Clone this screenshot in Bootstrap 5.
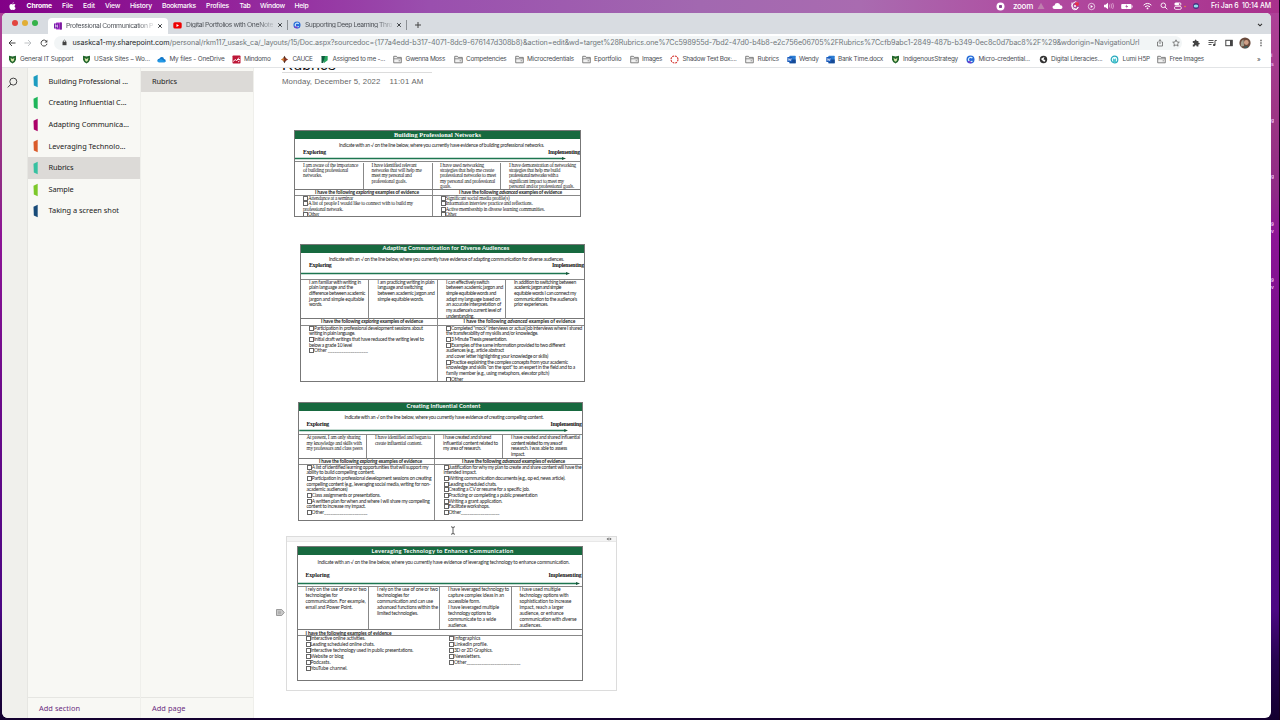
<!DOCTYPE html>
<html lang="en">
<head>
<meta charset="utf-8">
<title>Professional Communication Portfolio</title>
<meta name="viewport" content="width=device-width, initial-scale=1">
<link href="https://cdn.jsdelivr.net/npm/bootstrap@5.3.0/dist/css/bootstrap.min.css" rel="stylesheet">
<style>
html,body{height:100%}
body{margin:0;overflow:hidden;font-family:Inter,"Liberation Sans",sans-serif;color:#333;line-height:1}
svg{display:block;flex:none}
.desk{width:1280px;height:720px;background:linear-gradient(180deg,#b0429a 0,#9c3584 120px,#8f2a86 190px,#8d1496 235px,#6b0a8a 400px,#4b0783 610px,#260450 660px,#13002f 100%);border-right:1px solid #16001f;overflow:hidden}
.macbar{height:13px;background:linear-gradient(90deg,#820087 0,#93219a 220px,#9a4fae 430px,#a268b0 700px,#a96bb0 860px,#b04a9f 1050px,#a9308c 100%);color:#fff;font-size:6.8px;font-weight:500}
[data-w]{display:inline-block;white-space:nowrap}
.macmenu{display:grid;grid-template-columns:26.5px 35.5px 21px 22px 25px 32px 44px 33.5px 20.5px 34.5px 30px;align-items:center;height:12px}
.status{display:grid;grid-template-columns:22px 24px 15px 18px 17px 17px 17px 22px 17px 14px 18px 19px 60px;width:280px;margin-right:8px;align-items:center;height:12px}
.win{width:1269px;height:705px;margin-left:2px;border-radius:5px 5px 6px 6px;overflow:hidden;background:#fff}
.tabs{height:21px;background:#d8dce1;font-size:6.8px;color:#50545a}
.lights{width:46px;padding:7px 0 0 9.5px;gap:4px}
.lights i{width:6px;height:6px;border-radius:50%}
.tabx{height:16px;margin-top:5px}
.tabx.on{background:#fff;border-radius:4px 4px 0 0;width:120px}
.tx{flex:none;overflow:hidden;-webkit-mask-image:linear-gradient(90deg,#000 82%,#0003)}
.addr{height:17px;background:#fff}
.pill{width:1128px;height:14px;border-radius:7px;background:#f2f5f6;font-size:7.2px;color:#70757a}
.pill b{font-weight:400;color:#222528}
.marks{height:17px;font-size:6.4px;color:#4a4e54;border-bottom:1px solid #e2e4e6;display:grid;align-items:center;padding-left:5.5px;
 grid-template-columns:74px 75.5px 74.5px 48.5px 40px 73px 60.5px 61px 67px 48px 40.5px 75px 41.5px 39px 65px 75.5px 72.5px 71.5px 47px 101.5px 10px}
.marks>div{display:flex;align-items:center}
.marks svg{width:9px;height:9px;margin-right:3.5px}
.app{height:650px}
.rail{width:25.5px;background:#f0f0ec;border-right:1px solid #e6e6e2}
.pane{width:113px;background:#f8f8f4;font-family:"Noto Sans","Open Sans",sans-serif;font-size:7.4px;color:#222;border-right:1px solid #efefeb}
.sec{height:21.65px;padding-left:5px}
.sec svg{margin-right:11px}
.sel{background:#dcdad7}
.foot{height:21px;border-top:1px solid #e6e6e2;color:#6b2c80;padding-left:11.5px;line-height:20px}
.sheet{flex:1;overflow:hidden;position:relative}
.ttl{height:5px;width:150px;margin-left:28.5px;border-bottom:1px solid #dcdcdc;overflow:hidden;color:#111;font:500 15.5px/16px "Liberation Sans",sans-serif}
.ttl span{margin-top:-11px;vertical-align:top}
.when{height:17px;margin-left:28.5px;gap:9px;font:7.8px/18px "Liberation Sans",sans-serif;color:#666}
.rub{font-family:Lato,"Liberation Sans",sans-serif;font-size:5px;color:#262626;border:1px solid #777;background:#fff;overflow:hidden}
.rub .hd{background:#17693f;color:#fff;font-weight:700;font-size:5.8px;text-align:center;margin:-1px -1px 0}
.rub .lab,.serif{font-family:"Liberation Serif",serif}
.rub.serif,.rub .serif{font-size:5.3px}
.rub.serif .hd{font-size:6.3px}
.rub .lab{font-weight:700;font-size:5.8px;color:#111}
.rub .arw{height:3px;position:relative}
.rub .arw svg{width:100%;height:3px}
.lv{display:grid;border-top:1px solid #888;border-bottom:1px solid #777}
.lv>div+div,.ev>div+div,.ls>div+div{border-left:1px solid #888}
.lv>div,.ls>div{white-space:nowrap}
.ev,.ls{display:grid}
.ev{border-bottom:1px solid #888;font-weight:700;color:#222;font-size:4.9px}
.ln{height:var(--p);line-height:var(--p);display:block;white-space:nowrap}
.ln span,.ln em{vertical-align:top}
.ck span:before{content:"";display:inline-block;width:5px;height:5px;border:1px solid #666;vertical-align:-1px;background:#fff}
.r1{--p:5.4px;width:287px;height:87px;margin:40px 0 0 40.5px}
.r2{--p:5.7px;width:285px;height:137.5px;margin:27px 0 0 46.5px}
.r3{--p:5.7px;width:285px;height:118.5px;margin:20.5px 0 0 44px}
.box4{width:331px;height:155.5px;margin:15px 0 0 32.5px;border:1px solid #dcdcdc;position:relative}
.grip{height:5px;background:#f4f4f4;border-bottom:1px solid #e8e8e8}
.r4{--p:5.95px;width:286px;height:135px;margin:4.5px 0 0 9.5px}
.tag4{position:absolute;left:-11px;top:72.5px}
.caret{position:absolute;left:196.5px;top:458px}
.scrap{position:absolute;left:1271px;width:3px;overflow:hidden;color:#eebcf0;font:700 5px/5px "Liberation Sans",sans-serif}
</style>
</head>
<body>
<svg width="0" height="0" style="position:absolute">
<defs>
<symbol id="fold" viewBox="0 0 9 9"><path d="M.7 7.8V1.3h2.700l.8 1.100h4.100v5.400z" fill="#f1f1f1" stroke="#666" stroke-width=".8"/><path d="M.7 3.800h7.600M5.600 5.800h1.500" stroke="#666" stroke-width=".7"/></symbol>
<symbol id="shield" viewBox="0 0 9 9"><path d="M1 .8l3.500.6L8 .8v4Q7.300 7.400 4.500 8.600 1.700 7.400 1 4.800z" fill="#24672d"/><path d="M2.600 3l1.900 1 1.900-1-.6 2.700-1.300 1-1.300-1z" fill="#d6e6a8"/></symbol>
<symbol id="word" viewBox="0 0 9 9"><rect x="2.500" y=".7" width="6.200" height="7.600" rx=".6" fill="#2b7cd3"/><path d="M2.500 4.500h6.200v3.800H2.500z" fill="#174a94"/><rect x=".3" y="2" width="5" height="5" rx=".5" fill="#185abd"/><path d="M1.300 3.300l.7 2.400.8-2 .8 2 .7-2.400" fill="none" stroke="#fff" stroke-width=".6"/></symbol>
<symbol id="cc" viewBox="0 0 9 9"><circle cx="4.500" cy="4.500" r="4" fill="#276bd8"/><path d="M6.400 3.200A2.200 2.200 0 1 0 6.400 5.900" fill="none" stroke="#d6f0ff" stroke-width="1.200"/><path d="M1 6.500Q3 8.700 6 8.100L4 6z" fill="#7a35c9"/></symbol>
<symbol id="xx" viewBox="0 0 6 6"><path d="M1.200 1.200l3.600 3.600M4.800 1.200L1.200 4.800" stroke="#3c4043" stroke-width="1"/></symbol>
<symbol id="sct" viewBox="0 0 6 16"><path d="M5.600.5v15L1 13.500.6 3z" fill="currentColor"/></symbol>
</defs></svg>
<div class="desk position-relative">
 <div class="macbar d-flex justify-content-between">
  <div class="macmenu">
   <svg width="7" height="8" viewBox="0 0 14 16" style="margin-left:9px"><path d="M9.500 0Q9.500 3 6.800 3.600 6.800.8 9.500 0zM7 4.800C8 4.800 9 3.900 10.300 4q1.700.1 2.700 1.400-2 1.300-1.800 3.500.2 2 2.100 2.900Q11.800 15.800 9.800 15.900 8.200 15.300 7.200 15.300 6 15.400 5 15.900 3 16 1.500 12.300C-.2 8 1.500 4.500 4.300 4.100 5.500 4 6.300 4.800 7 4.800z" fill="#fff"/></svg>
   <span><b data-w="25.500">Chrome</b></span><span><span data-w="11">File</span></span><span><span data-w="12">Edit</span></span><span><span data-w="15">View</span></span><span><span data-w="22">History</span></span><span><span data-w="34">Bookmarks</span></span><span><span data-w="23">Profiles</span></span><span><span data-w="11">Tab</span></span><span><span data-w="25">Window</span></span><span><span data-w="14">Help</span></span>
  </div>
  <div class="status">
   <svg width="9" height="9" viewBox="0 0 9 9" style="margin-left:5px"><circle cx="4.500" cy="4.500" r="4" fill="#fff"/><rect x="3" y="3" width="3" height="3" rx=".7" fill="#86458e"/></svg>
   <span style="font-size:8px"><span data-w="20">zoom</span></span>
   <svg width="8" height="8" viewBox="0 0 8 8"><path d="M4 .8L7.500 7h-7z" fill="#bf7fae"/></svg>
   <svg width="11" height="8" viewBox="0 0 11 8"><path d="M2.500 7Q.4 6.800.5 5T2.500 3.400Q3 1 5.300 1T8.300 3.300Q10.500 3.400 10.500 5.200T8.800 7z" fill="#fff"/></svg>
   <svg width="10" height="10" viewBox="0 0 10 10"><path d="M2 1.500v4A3 3 0 0 0 8 6M8 2A3.500 3.500 0 1 0 8.500 6.500" fill="none" stroke="#fff"/><circle cx="7" cy="3" r="2" fill="#e4304c"/><circle cx="5" cy="5" r="1" fill="#fff"/></svg>
   <svg width="9" height="9" viewBox="0 0 9 9"><circle cx="4.500" cy="4.500" r="3.200" fill="none" stroke="#f4ddf0" stroke-width=".8"/><path d="M3.700 3l2.300 1.500L3.700 6z" fill="#fff"/></svg>
   <svg width="10" height="8" viewBox="0 0 10 8"><path d="M0 2.800h1.500L4 .8v6.400L1.500 5.200H0z" fill="#fff"/><path d="M5.300 2.500q1 1.500 0 3M7 1.700q1.600 2.300 0 4.600M8.600 1q2 3 0 6" fill="none" stroke="#e9b9dd" stroke-width=".7"/></svg>
   <svg width="12" height="7" viewBox="0 0 12 7"><rect x=".2" y="1" width="10.300" height="5" rx="1" fill="#fff"/><path d="M11.200 2.500v2" stroke="#fff" stroke-width=".8"/><path d="M5.800 1.300L4.300 3.700h1.500l-.7 2 2-2.600H5.600z" fill="#a33b90"/></svg>
   <svg width="9" height="8" viewBox="0 0 9 8"><path d="M.6 3.200q3.900-3.600 7.800 0M2 4.800q2.500-2.200 5 0" fill="none" stroke="#fff" stroke-width="1"/><circle cx="4.500" cy="6.400" r=".9" fill="#fff"/></svg>
   <svg width="8" height="8" viewBox="0 0 8 8"><circle cx="3.300" cy="3.300" r="2.300" fill="none" stroke="#fff" stroke-width=".9"/><path d="M5 5l2.300 2.300" stroke="#fff" stroke-width=".9"/></svg>
   <svg width="12" height="8" viewBox="0 0 12 8"><rect x=".4" y=".6" width="7" height="3" rx="1.500" fill="#fff"/><rect x=".4" y="4.400" width="7" height="3" rx="1.500" fill="none" stroke="#fff" stroke-width=".8"/><circle cx="5.700" cy="2.100" r=".9" fill="#aa3d94"/><circle cx="11" cy="4.500" r=".8" fill="#f08a35"/></svg>
   <svg width="8" height="8" viewBox="0 0 8 8"><circle cx="4" cy="4" r="3" fill="#493080"/><ellipse cx="4" cy="4" rx="2.300" ry="1.500" fill="#8fe1ee"/></svg>
   <span><span data-w="60" style="font-size:7px">Fri Jan 6&nbsp; 10:14 AM</span></span>
  </div>
 </div>
 <div class="win">
  <div class="tabs d-flex">
   <div class="lights d-flex"><i style="background:#e2463f"></i><i style="background:#e1ae35"></i><i style="background:#35b24a"></i></div>
   <div class="tabx on d-flex align-items-center">
    <svg width="8" height="8" viewBox="0 0 8 8" style="margin:0 4px 0 6px"><rect x="2" y=".5" width="5.800" height="7" rx=".5" fill="#b43ad0"/><path d="M6 .5h1.800v7H6z" fill="#7a1c9d"/><rect x="0" y="1.500" width="5" height="5" fill="#7719aa"/><path d="M1.500 5.500V2.600l2 2.800V2.600" stroke="#fff" stroke-width=".6" fill="none"/></svg>
    <div class="tx"><span data-w="87">Professional Communication P</span></div><svg width="6" height="6" style="margin-left:4px"><use href="#xx"/></svg>
   </div>
   <div class="tabx d-flex align-items-center" style="width:120px;border-right:1px solid #8c9095;height:10px;margin-top:7px">
    <svg width="9" height="7" viewBox="0 0 9 7" style="margin:0 4px 0 5px"><rect x=".3" y=".3" width="8.400" height="6.200" rx="1.500" fill="#e00"/><path d="M3.500 2l2.500 1.400-2.500 1.500z" fill="#fff"/></svg>
    <div class="tx"><span data-w="87">Digital Portfolios with OneNote</span></div><svg width="6" height="6" style="margin-left:4px"><use href="#xx"/></svg>
   </div>
   <div class="tabx d-flex align-items-center" style="width:119px;border-right:1px solid #8c9095;height:10px;margin-top:7px">
    <svg width="8" height="8" viewBox="0 0 9 9" style="margin:0 4px 0 5px"><use href="#cc"/></svg>
    <div class="tx"><span data-w="87">Supporting Deep Learning Thro</span></div><svg width="6" height="6" style="margin-left:4px"><use href="#xx"/></svg>
   </div>
   <svg width="8" height="8" viewBox="0 0 8 8" style="margin:8px 0 0 7px"><path d="M4 1v6M1 4h6" stroke="#444" stroke-width="1"/></svg>
   <svg class="ms-auto" width="6" height="6" viewBox="0 0 6 6" style="margin:9px 8.500px 0 0"><path d="M1 1.800l2 2 2-2" fill="none" stroke="#333" stroke-width="1.100"/></svg>
  </div>
  <div class="addr d-flex align-items-center">
   <svg width="8" height="8" viewBox="0 0 8 8" style="margin-left:6px"><path d="M7.500 4H1M4 1L1 4l3 3" fill="none" stroke="#444" stroke-width="1"/></svg>
   <svg width="8" height="8" viewBox="0 0 8 8" style="margin-left:8px"><path d="M.5 4H7M4 1l3 3-3 3" fill="none" stroke="#b8bbbe" stroke-width=".9"/></svg>
   <svg width="8" height="8" viewBox="0 0 8 8" style="margin:0 6px 0 8px"><path d="M6.700 2.600A3 3 0 1 0 7 4.800" fill="none" stroke="#444" stroke-width="1"/><path d="M7.300.7v2.800H4.600z" fill="#444"/></svg>
   <div class="pill d-flex align-items-center">
    <svg width="5" height="7" viewBox="0 0 5 7" style="margin:0 5.500px 0 8px"><rect x=".5" y="2.800" width="4" height="3.400" fill="#444"/><path d="M1.400 3V1.900q1.100-1.600 2.200 0V3" fill="none" stroke="#444" stroke-width=".7"/></svg>
    <b data-w="97">usaskca1-my.sharepoint.com</b><span data-w="970">/personal/rkm117_usask_ca/_layouts/15/Doc.aspx?sourcedoc={177a4edd-b317-4071-8dc9-676147d308b8}&amp;action=edit&amp;wd=target%28Rubrics.one%7Cc598955d-7bd2-47d0-b4b8-e2c756e06705%2FRubrics%7Ccfb9abc1-2849-487b-b349-0ec8c0d7bac8%2F%29&amp;wdorigin=NavigationUrl</span>
    <svg width="8" height="8" viewBox="0 0 8 8" style="margin-left:16.500px"><path d="M2.500 3H1.500v4h5V3h-1M4 5V.8M2.600 2L4 .7 5.400 2" fill="none" stroke="#555" stroke-width=".7"/></svg>
    <svg width="8" height="8" viewBox="0 0 8 8" style="margin-left:8px"><path d="M4 .8l1 2.200 2.300.2L5.600 4.800l.5 2.300L4 5.900 1.900 7.100l.5-2.300L.7 3.200 3 3z" fill="none" stroke="#555" stroke-width=".7"/></svg>
   </div>
   <svg width="8" height="8" viewBox="0 0 8 8" style="margin-left:10px"><path d="M.8 2H2.700Q2.500.5 3.600.5T4.600 2H6.400V3.700Q7.800 3.600 7.800 4.600T6.400 5.600V7.500H4.700Q4.700 6.200 3.700 6.200T2.600 7.500H.8V5.600Q2.100 5.600 2.100 4.700T.8 3.700z" fill="#444"/></svg>
   <svg width="9" height="8" viewBox="0 0 9 8" style="margin-left:8px"><path d="M.5 1.500h5M.5 3.500h5M.5 5.500h3M7 5.800V1.500h1.800" fill="none" stroke="#444" stroke-width=".9"/><circle cx="6.200" cy="5.900" r="1.200" fill="#444"/></svg>
   <svg width="8" height="8" viewBox="0 0 8 8" style="margin-left:7.500px"><rect x=".8" y="1.300" width="6.400" height="5.400" fill="none" stroke="#444"/><path d="M5 1h2.500v6H5z" fill="#444"/></svg>
   <svg width="12" height="12" viewBox="0 0 12 12" style="margin-left:6px"><circle cx="6" cy="6" r="5.600" fill="#6a4a3c"/><circle cx="7.300" cy="5.500" r="2.400" fill="#cf9f86"/><path d="M2 9.500Q1 4 4.500 2.500L5 9z" fill="#a5a08f"/><path d="M4.500 11Q6.500 7.500 9.500 9.800 7.500 12 4.500 11z" fill="#3e5a5c"/></svg>
   <svg width="4" height="8" viewBox="0 0 4 8" style="margin-left:8px"><path d="M2 .8v1.400M2 3.300v1.400M2 5.800v1.400" stroke="#555" stroke-width="1.300"/></svg>
  </div>
  <div class="marks">
   <div><svg><use href="#shield"/></svg><span data-w="53.500">General IT Support</span></div>
   <div><svg><use href="#shield"/></svg><span data-w="56">USask Sites – Wo...</span></div>
   <div><svg viewBox="0 0 9 9"><path d="M1.700 7.200Q.2 6.800.4 5.200T2.300 3.700Q3.200 1.800 5 2T7 4Q8.700 4.200 8.700 5.700T7.400 7.200z" fill="#1177c9"/><path d="M.5 5.800L4 4l4.500 2.600Q8 7.200 7.400 7.200H1.700Q.7 7 .5 5.800z" fill="#2299e6"/></svg><span data-w="55">My files - OneDrive</span></div>
   <div><svg viewBox="0 0 9 9"><rect x=".5" y=".5" width="8" height="8" rx=".8" fill="#bd1637"/><path d="M1 6.500l2.500-2 1 1.500L7 2.500M5 4.500h3M6 7l1.500-1" stroke="#fff" stroke-width=".9" fill="none"/></svg><span data-w="26.500">Mindomo</span></div>
   <div><svg viewBox="0 0 9 9"><path d="M4.500.8L6.500 4.500 4.500 8.200 2.500 4.500z" fill="#3a1a10"/><path d="M.8 4.500L4.500 2.500v4z" fill="#cf762d"/><path d="M8.200 4.500L4.500 2.500v4z" fill="#863326"/></svg><span data-w="20">CAUCE</span></div>
   <div><svg viewBox="0 0 9 9"><path d="M1.500 1h6.200v4.300L4 8z" fill="#27a35e"/><path d="M1.500 1H5L3.200 8H1.500z" fill="#0d5c3d"/></svg><span data-w="52.500">Assigned to me -...</span></div>
   <div><svg><use href="#fold"/></svg><span data-w="39.500">Gwenna Moss</span></div>
   <div><svg><use href="#fold"/></svg><span data-w="40.500">Competencies</span></div>
   <div><svg><use href="#fold"/></svg><span data-w="47">Microcredentials</span></div>
   <div><svg><use href="#fold"/></svg><span data-w="27.500">Eportfolio</span></div>
   <div><svg><use href="#fold"/></svg><span data-w="20">Images</span></div>
   <div><svg viewBox="0 0 9 9"><circle cx="4.500" cy="4.500" r="3.500" fill="none" stroke="#d3302b" stroke-width="1.100" stroke-dasharray="1.900 .85"/></svg><span data-w="54">Shadow Text Box:...</span></div>
   <div><svg><use href="#fold"/></svg><span data-w="21.500">Rubrics</span></div>
   <div><svg><use href="#word"/></svg><span data-w="19.500">Wendy</span></div>
   <div><svg><use href="#word"/></svg><span data-w="45">Bank Time.docx</span></div>
   <div><svg><use href="#shield"/></svg><span data-w="55">IndigenousStrategy</span></div>
   <div><svg><use href="#cc"/></svg><span data-w="51.500">Micro-credential...</span></div>
   <div><svg viewBox="0 0 9 9"><circle cx="4.500" cy="4.500" r="3.700" fill="#333"/><path d="M1.500 3.500Q3 4 4 2.500L5.500 2.300 4.500 4.500 6.500 5 5.300 7 3.500 5.500z" fill="#fff"/></svg><span data-w="51.500">Digital Literacies...</span></div>
   <div><svg viewBox="0 0 9 9"><circle cx="4.500" cy="4.500" r="3.300" fill="#eafcff" stroke="#29a9bd" stroke-width="1.200"/><path d="M3 3q1.500 2.500 3 0v4L4.500 8 3 7z" fill="#50c7cf"/></svg><span data-w="27.500">Lumi H5P</span></div>
   <div><svg><use href="#fold"/></svg><span data-w="34.500">Free Images</span></div>
   <div style="margin-left:-1.500px"><span>»</span></div>
  </div>
  <div class="app d-flex">
   <div class="rail"><svg width="11" height="12" viewBox="0 0 11 12" style="margin:9px 0 0 5px"><circle cx="6.300" cy="4.600" r="3.500" fill="none" stroke="#444"/><path d="M3.800 7.200L.8 10.400" stroke="#444"/></svg></div>
   <div class="pane d-flex flex-column" style="padding-top:2.500px">
    <div class="sec d-flex align-items-center"><svg width="5" height="16" style="color:#1c9cc0"><use href="#sct"/></svg><span data-w="79.500">Building Professional ...</span></div>
    <div class="sec d-flex align-items-center"><svg width="5" height="16" style="color:#1fb65a"><use href="#sct"/></svg><span data-w="78">Creating Influential C...</span></div>
    <div class="sec d-flex align-items-center"><svg width="5" height="16" style="color:#ab0068"><use href="#sct"/></svg><span data-w="80.500">Adapting Communica...</span></div>
    <div class="sec d-flex align-items-center"><svg width="5" height="16" style="color:#da5b2a"><use href="#sct"/></svg><span data-w="77">Leveraging Technolo...</span></div>
    <div class="sec sel d-flex align-items-center"><svg width="5" height="16" style="color:#37c1a1"><use href="#sct"/></svg><span data-w="25">Rubrics</span></div>
    <div class="sec d-flex align-items-center"><svg width="5" height="16" style="color:#7cc829"><use href="#sct"/></svg><span data-w="25">Sample</span></div>
    <div class="sec d-flex align-items-center"><svg width="5" height="16" style="color:#184b78"><use href="#sct"/></svg><span data-w="70.500">Taking a screen shot</span></div>
    <div class="foot mt-auto"><span data-w="41">Add section</span></div>
   </div>
   <div class="pane d-flex flex-column" style="padding-top:2.500px">
    <div class="sec sel d-flex align-items-center" style="padding-left:11.500px"><span data-w="25">Rubrics</span></div>
    <div class="foot mt-auto"><span data-w="33.500">Add page</span></div>
   </div>
   <div class="sheet">
    <div class="ttl"><span data-w="54">Rubrics</span></div>
    <div class="when d-flex"><span data-w="98.500">Monday, December 5, 2022</span><span data-w="34">11:01 AM</span></div>

    <div class="rub r1 serif">
     <div class="hd" style="height:9px;line-height:9px"><span data-w="87">Building Professional Networks</span></div>
     <div style="height:9.500px;line-height:13px;padding-left:44px;font-family:Lato;font-size:5px"><span data-w="205">Indicate with an √ on the line below, where you currently have evidence of building professional networks.</span></div>
     <div class="lab d-flex justify-content-between" style="height:9px;line-height:7px;padding-left:8px"><span data-w="23">Exploring</span><span data-w="32">Implementing</span></div>
     <div class="arw" style="width:271px;margin-top:-1px"><svg viewBox="0 0 271 3"><path d="M0 1.500h268" stroke="#1d7650" stroke-width="1.300"/><path d="M267 0l4 1.500-4 1.500z" fill="#17593d"/></svg></div>
     <div class="lv" style="height:28.500px;margin-top:1.500px;padding-top:.5px;grid-template-columns:67.500px 69px 68.500px 80px">
      <div style="padding-left:8px"><div class="ln"><span data-w="55">I am aware of the importance</span></div><div class="ln"><span data-w="45">of building professional</span></div><div class="ln"><span data-w="19">networks.</span></div></div>
      <div style="padding-left:8px"><div class="ln"><span data-w="45">I have identified relevant</span></div><div class="ln"><span data-w="50">networks that will help me</span></div><div class="ln"><span data-w="40">meet my personal and</span></div><div class="ln"><span data-w="35">professional goals.</span></div></div>
      <div style="padding-left:7.500px"><div class="ln"><span data-w="44">I have used networking</span></div><div class="ln"><span data-w="54">strategies that help me create</span></div><div class="ln"><span data-w="56">professional networks to meet</span></div><div class="ln"><span data-w="55">my personal and professional</span></div><div class="ln"><span data-w="11">goals.</span></div></div>
      <div style="padding-left:8px"><div class="ln"><span data-w="67">I have demonstration of networking</span></div><div class="ln"><span data-w="51">strategies that help me build</span></div><div class="ln"><span data-w="49">professional networks with a</span></div><div class="ln"><span data-w="55">significant impact to meet my</span></div><div class="ln"><span data-w="65">personal and/or professional goals.</span></div></div>
     </div>
     <div class="ev" style="height:6.500px;line-height:5px;font-family:Lato;grid-template-columns:136.500px 148.500px"><div style="padding-left:20px"><span data-w="104">I have the following <i>exploring</i> examples of evidence</span></div><div style="padding-left:26.500px"><span data-w="103">I have the following <i>advanced</i> examples of evidence</span></div></div>
     <div class="ls ck" style="height:22.500px;grid-template-columns:136.500px 148.500px">
      <div style="padding-left:8px"><div class="ln"><span data-w="50">Attendance at a seminar</span></div><div class="ln"><span data-w="110">A list of people I would like to connect with to build my</span></div><div class="ln"><em class="fst-normal" data-w="40">professional network.</em></div><div class="ln"><span data-w="16">Other</span></div></div>
      <div style="padding-left:8px"><div class="ln"><span data-w="69">Significant social media profile(s)</span></div><div class="ln"><span data-w="92">Information interview practice and reflections.</span></div><div class="ln"><span data-w="104">Active membership in diverse learning communities.</span></div><div class="ln"><span data-w="16">Other</span></div></div>
     </div>
    </div>

    <div class="rub r2">
     <div class="hd" style="height:9px;line-height:8.500px;padding-left:7px"><span data-w="127">Adapting Communication for Diverse Audiences</span></div>
     <div style="height:9px;line-height:12.500px;padding-left:28px"><span data-w="235">Indicate with an √ on the line below, where you currently have evidence of adapting communication for diverse audiences.</span></div>
     <div class="lab d-flex justify-content-between" style="height:9px;line-height:7.500px;padding-left:8px"><span data-w="22.500">Exploring</span><span data-w="32">Implementing</span></div>
     <div class="arw" style="width:269px;margin-top:.5px"><svg viewBox="0 0 269 3"><path d="M0 1.500h266" stroke="#1d7650" stroke-width="1.300"/><path d="M265 0l4 1.500-4 1.500z" fill="#17593d"/></svg></div>
     <div class="lv" style="height:40.500px;margin-top:4px;grid-template-columns:67px 68.500px 68px 79.500px">
      <div style="padding-left:8px"><div class="ln"><span data-w="52">I am familiar with writing in</span></div><div class="ln"><span data-w="44">plain language and the</span></div><div class="ln"><span data-w="56">difference between academic</span></div><div class="ln"><span data-w="55">jargon and simple equitable</span></div><div class="ln"><span data-w="13">words.</span></div></div>
      <div style="padding-left:8.500px"><div class="ln"><span data-w="57">I am practicing writing in plain</span></div><div class="ln"><span data-w="45">language and switching</span></div><div class="ln"><span data-w="57">between academic jargon and</span></div><div class="ln"><span data-w="46">simple equitable words.</span></div></div>
      <div style="padding-left:8.500px"><div class="ln"><span data-w="43">I can effectively switch</span></div><div class="ln"><span data-w="57">between academic jargon and</span></div><div class="ln"><span data-w="50">simple equitable words and</span></div><div class="ln"><span data-w="54">adapt my language based on</span></div><div class="ln"><span data-w="55">an accurate interpretation of</span></div><div class="ln"><span data-w="55">my audience's current level of</span></div><div class="ln"><span data-w="28">understanding.</span></div></div>
      <div style="padding-left:8.500px"><div class="ln"><span data-w="62">In addition to switching between</span></div><div class="ln"><span data-w="47">academic jargon and simple</span></div><div class="ln"><span data-w="62">equitable words I can connect my</span></div><div class="ln"><span data-w="63">communication to the audience's</span></div><div class="ln"><span data-w="34">prior experiences.</span></div></div>
     </div>
     <div class="ev" style="height:6.500px;line-height:5px;grid-template-columns:135.500px 147.500px"><div style="padding-left:20px"><span data-w="102">I have the following <i>exploring</i> examples of evidence</span></div><div style="padding-left:26px"><span data-w="112">I have the following <i>advanced</i> examples of evidence</span></div></div>
     <div class="ls" style="height:58px;grid-template-columns:135.500px 147.500px">
      <div style="padding-left:8px"><div class="ln ck"><span data-w="114">Participation in professional development sessions about</span></div><div class="ln"><span data-w="46">writing in plain language.</span></div><div class="ln ck"><span data-w="115">Initial draft writings that have reduced the writing level to</span></div><div class="ln"><span data-w="43">below a grade 10 level</span></div><div class="ln ck"><span data-w="59">Other __________________</span></div></div>
      <div style="padding-left:8.500px"><div class="ln ck"><span data-w="136">Completed "mock" interviews or actual job interviews where I shared</span></div><div class="ln"><span data-w="92">the transferability of my skills and/or knowledge.</span></div><div class="ln ck"><span data-w="61">3 Minute Thesis presentation.</span></div><div class="ln ck"><span data-w="119">Examples of the same information provided to two different</span></div><div class="ln"><span data-w="58">audiences (e.g., article abstract</span></div><div class="ln"><span data-w="102">and cover letter highlighting your knowledge or skills)</span></div><div class="ln ck"><span data-w="122">Practice explaining the complex concepts from your academic</span></div><div class="ln"><span data-w="129">knowledge and skills "on the spot" to an expert in the field and to a</span></div><div class="ln"><span data-w="103">family member (e.g., using metaphors, elevator pitch)</span></div><div class="ln ck"><span data-w="55">Other__________________</span></div></div>
     </div>
    </div>

    <div class="rub r3">
     <div class="hd" style="height:9px;line-height:8.500px;padding-left:7px"><span data-w="74">Creating Influential Content</span></div>
     <div style="height:9px;line-height:13px;padding-left:46px"><span data-w="199">Indicate with an √ on the line below, where you currently have evidence of creating compelling content.</span></div>
     <div class="lab d-flex justify-content-between" style="height:9px;line-height:8px;padding-left:8px"><span data-w="22.500">Exploring</span><span data-w="31">Implementing</span></div>
     <div class="arw" style="width:269.500px;margin-top:-.5px"><svg viewBox="0 0 269 3"><path d="M0 1.500h266" stroke="#1d7650" stroke-width="1.300"/><path d="M265 0l4 1.500-4 1.500z" fill="#17593d"/></svg></div>
     <div class="lv" style="height:24.500px;margin-top:2.500px;grid-template-columns:67.500px 68px 68px 79.500px">
      <div class="serif" style="padding-left:8px"><div class="ln"><span data-w="54">At present, I am only sharing</span></div><div class="ln"><span data-w="55">my knowledge and skills with</span></div><div class="ln"><span data-w="56">my professors and class peers</span></div></div>
      <div class="serif" style="padding-left:8px"><div class="ln"><span data-w="56">I have identified and begun to</span></div><div class="ln"><span data-w="47">create influential content.</span></div></div>
      <div style="padding-left:8px"><div class="ln"><span data-w="48">I have created and shared</span></div><div class="ln"><span data-w="55">influential content related to</span></div><div class="ln"><span data-w="38">my area of research.</span></div></div>
      <div style="padding-left:8px"><div class="ln"><span data-w="69">I have created and shared influential</span></div><div class="ln"><span data-w="51">content related to my area of</span></div><div class="ln"><span data-w="56">research. I was able to assess</span></div><div class="ln"><span data-w="14">impact.</span></div></div>
     </div>
     <div class="ev" style="height:6px;line-height:4.500px;grid-template-columns:135.500px 147.500px"><div style="padding-left:20.500px"><span data-w="103">I have the following <i>exploring</i> examples of evidence</span></div><div style="padding-left:27px"><span data-w="103">I have the following <i>advanced</i> examples of evidence</span></div></div>
     <div class="ls" style="height:58px;grid-template-columns:135.500px 147.500px">
      <div style="padding-left:8px"><div class="ln ck"><span data-w="122">&thinsp;A list of identified learning opportunities that will support my</span></div><div class="ln"><span data-w="68">ability to build compelling content.</span></div><div class="ln ck"><span data-w="125">&thinsp;Participation in professional development sessions on creating</span></div><div class="ln"><span data-w="124">compelling content (e.g., leveraging social media, writing for non-</span></div><div class="ln"><span data-w="41">academic audiences)</span></div><div class="ln ck"><span data-w="74">&thinsp;Class assignments or presentations.</span></div><div class="ln ck"><span data-w="123">&thinsp;A written plan for when and where I will share my compelling</span></div><div class="ln"><span data-w="59">content to increase my impact.</span></div><div class="ln ck"><span data-w="61">Other____________________</span></div></div>
      <div style="padding-left:8.500px"><div class="ln ck"><span data-w="138">Justification for why my plan to create and share content will have the</span></div><div class="ln"><span data-w="33">intended impact.</span></div><div class="ln ck"><span data-w="122">Writing communication documents (e.g., op ed, news article).</span></div><div class="ln ck"><span data-w="53">Leading scheduled chats.</span></div><div class="ln ck"><span data-w="86">Creating a CV or resume for a specific job.</span></div><div class="ln ck"><span data-w="94">Practicing or completing a public presentation</span></div><div class="ln ck"><span data-w="59">Writing a grant application.</span></div><div class="ln ck"><span data-w="46">Facilitate workshops.</span></div><div class="ln ck"><span data-w="56">Other__________________</span></div></div>
     </div>
    </div>

    <div class="box4">
     <div class="grip"><svg width="6" height="4" viewBox="0 0 6 4" style="margin-left:319px"><path d="M2.600.4L.5 2l2.100 1.600zM3.600.4L5.700 2 3.600 3.600z" fill="#666"/></svg></div>
     <svg class="tag4" width="9" height="7" viewBox="0 0 9 7"><path d="M.5.5h5.200L8.300 3.500 5.700 6.500H.5z" fill="#c9c9c9" stroke="#888" stroke-width=".8"/><path d="M2 2.300h3M2 3.500h3M2 4.700h3" stroke="#888" stroke-width=".4"/></svg>
     <div class="rub r4">
      <div class="hd" style="height:9px;line-height:9px;padding-left:6px"><span data-w="142">Leveraging Technology to Enhance Communication</span></div>
      <div style="height:13px;line-height:14px;padding-left:20px"><span data-w="252">Indicate with an √ on the line below, where you currently have evidence of leveraging technology to enhance communication.</span></div>
      <div class="lab d-flex justify-content-between" style="height:13px;line-height:15px;padding-left:8px"><span data-w="24">Exploring</span><span data-w="33">Implementing</span></div>
      <div class="arw" style="width:282px;margin-top:.5px"><svg viewBox="0 0 282 3"><path d="M0 1.500h279" stroke="#1d7650" stroke-width="1.300"/><path d="M278 0l4 1.500-4 1.500z" fill="#17593d"/></svg></div>
      <div class="lv" style="height:43.500px;margin-top:1.500px;grid-template-columns:70.500px 71px 71.500px 71px">
       <div style="padding-left:8px"><div class="ln"><span data-w="61">I rely on the use of one or two</span></div><div class="ln"><span data-w="32">technologies for</span></div><div class="ln"><span data-w="60">communication. For example,</span></div><div class="ln"><span data-w="47">email and Power Point.</span></div></div>
       <div style="padding-left:8px"><div class="ln"><span data-w="61">I rely on the use of one or two</span></div><div class="ln"><span data-w="32">technologies for</span></div><div class="ln"><span data-w="56">communication and can use</span></div><div class="ln"><span data-w="61">advanced functions within the</span></div><div class="ln"><span data-w="41">limited technologies.</span></div></div>
       <div style="padding-left:8px"><div class="ln"><span data-w="61">I have leveraged technology to</span></div><div class="ln"><span data-w="56">capture complex ideas in an</span></div><div class="ln"><span data-w="32">accessible form.</span></div><div class="ln"><span data-w="51">I have leveraged multiple</span></div><div class="ln"><span data-w="43">technology options to</span></div><div class="ln"><span data-w="48">communicate to a wide</span></div><div class="ln"><span data-w="19">audience.</span></div></div>
       <div style="padding-left:8px"><div class="ln"><span data-w="41">I have used multiple</span></div><div class="ln"><span data-w="49">technology options with</span></div><div class="ln"><span data-w="52">sophistication to increase</span></div><div class="ln"><span data-w="44">impact, reach a larger</span></div><div class="ln"><span data-w="44">audience, or enhance</span></div><div class="ln"><span data-w="57">communication with diverse</span></div><div class="ln"><span data-w="22">audiences.</span></div></div>
      </div>
      <div class="ev" style="height:6.500px;line-height:6px;padding-left:8px"><div><span data-w="86">I have the following examples of evidence</span></div></div>
      <div class="ls ck" style="grid-template-columns:151px 133px">
       <div style="padding-left:8px"><div class="ln"><span data-w="60">Interactive online activities.</span></div><div class="ln"><span data-w="69">Leading scheduled online chats.</span></div><div class="ln"><span data-w="108">Interactive technology used in public presentations.</span></div><div class="ln"><span data-w="38">Website or blog</span></div><div class="ln"><span data-w="25">Podcasts.</span></div><div class="ln"><span data-w="42">YouTube channel.</span></div></div>
       <div class="border-0"><div class="ln"><span data-w="32">&thinsp;Infographics</span></div><div class="ln"><span data-w="39">&thinsp;LinkedIn profile.</span></div><div class="ln"><span data-w="44">&thinsp;3D or 2D Graphics.</span></div><div class="ln"><span data-w="32">&thinsp;Newsletters.</span></div><div class="ln"><span data-w="72">&thinsp;Other_________________________</span></div></div>
      </div>
     </div>
    </div>
    <svg class="caret" width="6" height="9" viewBox="0 0 6 9"><path d="M1 .8q2 0 2 1 0-1 2-1M3 1.500v6M1 8.200q2 0 2-1 0 1 2 1" fill="none" stroke="#333" stroke-width=".8"/></svg>
   </div>
  </div>
 </div>
 <span class="scrap" style="top:53px">i</span><span class="scrap" style="top:62px">s</span><span class="scrap" style="top:118px">g</span><span class="scrap" style="top:174px">g</span><span class="scrap" style="top:222px">9</span><span class="scrap" style="top:229px">v</span><span class="scrap" style="top:278px">9</span><span class="scrap" style="top:285px">v</span>
</div>
<script src="https://cdn.jsdelivr.net/npm/bootstrap@5.3.0/dist/js/bootstrap.bundle.min.js"></script>
<script>
// Track each label so that it fills its intended measure
document.querySelectorAll('[data-w]').forEach(function (el) {
  var gap = el.dataset.w - el.getBoundingClientRect().width;
  el.style.letterSpacing = (gap / el.textContent.length).toFixed(4) + 'px';
});
</script>
</body>
</html>
